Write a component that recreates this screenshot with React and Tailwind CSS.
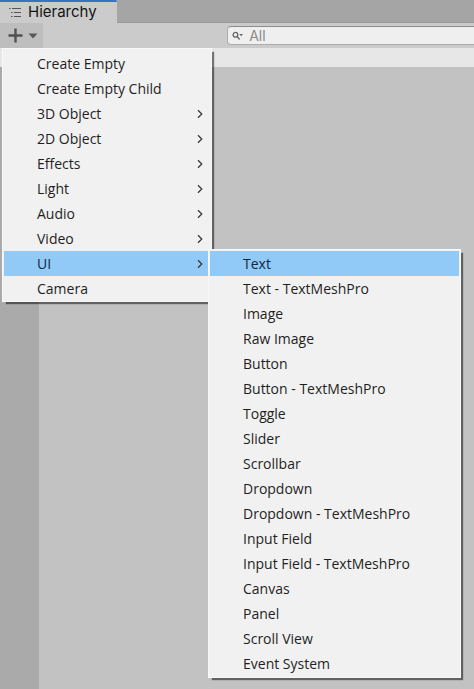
const createItems = [
  { label: 'Create Empty' },
  { label: 'Create Empty Child' },
  { label: '3D Object', more: true },
  { label: '2D Object', more: true },
  { label: 'Effects', more: true },
  { label: 'Light', more: true },
  { label: 'Audio', more: true },
  { label: 'Video', more: true },
  { label: 'UI', more: true, open: true },
  { label: 'Camera' },
];

const uiItems = [
  'Text',
  'Text - TextMeshPro',
  'Image',
  'Raw Image',
  'Button',
  'Button - TextMeshPro',
  'Toggle',
  'Slider',
  'Scrollbar',
  'Dropdown',
  'Dropdown - TextMeshPro',
  'Input Field',
  'Input Field - TextMeshPro',
  'Canvas',
  'Panel',
  'Scroll View',
  'Event System',
];

const menuClass =
  'absolute border border-[#f8f8f8] bg-[#f1f1f1] px-px shadow-[3px_3px_1px_-1px_rgba(0,0,0,0.5)]';

function MenuItem({ label, more, active, open }) {
  return (
    <button
      type="button"
      role="menuitem"
      aria-haspopup={more ? 'menu' : undefined}
      aria-expanded={more ? Boolean(open) : undefined}
      className={`flex h-[25px] w-full items-center justify-between pr-[6px] pl-[33px] text-left whitespace-nowrap ${
        active ? 'bg-[#91c9f7] text-[#10263c]' : 'text-[#1f1f1f]'
      }`}
    >
      <span>{label}</span>
      {more && (
        <svg aria-hidden="true" viewBox="0 0 8 10" className="h-[10px] w-2" fill="none" stroke="#333" strokeWidth="1.2">
          <path d="M2 1.3 L5.8 5 L2 8.7" />
        </svg>
      )}
    </button>
  );
}

function UiMenu() {
  return (
    <ul role="menu" aria-label="UI" className={`${menuClass} -top-[2px] left-[204px] w-[253px] py-px`}>
      {uiItems.map((label, i) => (
        <li key={label} role="none">
          <MenuItem label={label} active={i === 0} />
        </li>
      ))}
    </ul>
  );
}

function CreateMenu() {
  return (
    <ul role="menu" aria-label="Create" className={`${menuClass} top-full left-[2px] w-[210px] pt-[2px]`}>
      {createItems.map((item) => (
        <li key={item.label} role="none" className="relative">
          <MenuItem {...item} active={item.open} />
          {item.open && <UiMenu />}
        </li>
      ))}
    </ul>
  );
}

export default function App() {
  return (
    <div className="flex min-h-screen flex-col overflow-hidden bg-[#c2c2c2] font-['Open_Sans','Noto_Sans',sans-serif] text-[14px]">
      <header className="flex h-[23px] border-b border-[#999] bg-[#a5a5a5]">
        <div className="-mb-px flex w-[117px] items-center gap-[6px] rounded-tr-[2px] border-t-2 border-[#3474c4] bg-[#cbcbcb] pl-2">
          <svg aria-hidden="true" viewBox="0 0 14 12" className="h-3 w-[14px]" fill="none" stroke="#555" strokeWidth="1.2">
            <path d="M1 1.5 H2.6 M4 1.5 H13 M3 5.5 H4.6 M6 5.5 H13 M3 9.5 H4.6 M6 9.5 H13" />
          </svg>
          <h1 className="font-['Inter',sans-serif] text-[15px] text-[#141414]">Hierarchy</h1>
        </div>
      </header>
      <div className="relative z-10 flex h-[25px] items-center justify-between bg-[#cbcbcb]">
        <button type="button" aria-label="Create" className="flex h-full w-[43px] items-center gap-[5px] bg-[#bebebe] pl-2">
          <svg aria-hidden="true" viewBox="0 0 15 15" className="size-[15px]" fill="none" stroke="#505050" strokeWidth="2.4">
            <path d="M7.5 0.5 V14.5 M0.5 7.5 H14.5" />
          </svg>
          <svg aria-hidden="true" viewBox="0 0 10 6" className="h-[6px] w-[10px]" fill="#585858">
            <path d="M0.5 0.5 H9.5 L5 5.5 Z" />
          </svg>
        </button>
        <label className="ml-[184px] flex h-[19px] flex-1 items-center gap-[6px] rounded-l-[4px] border border-r-0 border-[#adadad] border-t-[#8c8c8c] bg-[#efefef] pl-1">
          <svg aria-hidden="true" viewBox="0 0 12 10" className="h-[10px] w-3" fill="none" stroke="#666" strokeWidth="1.4">
            <circle cx="3.7" cy="3.7" r="2.5" />
            <path d="M5.5 5.5 L8.2 8.8" />
            <path d="M7.8 2.8 H11.8 L9.8 5.2 Z" fill="#666" stroke="none" />
          </svg>
          <input
            type="text"
            aria-label="Search"
            placeholder="All"
            className="w-full min-w-0 bg-transparent font-['Inter',sans-serif] text-[14px] leading-4 outline-none placeholder:text-[#8a8a8a]"
          />
        </label>
        <CreateMenu />
      </div>
      <div className="h-[19px] bg-[#e7e7e7]" />
      <main className="flex flex-1">
        <div className="w-[39px] bg-[#aaaaaa]" />
      </main>
    </div>
  );
}
